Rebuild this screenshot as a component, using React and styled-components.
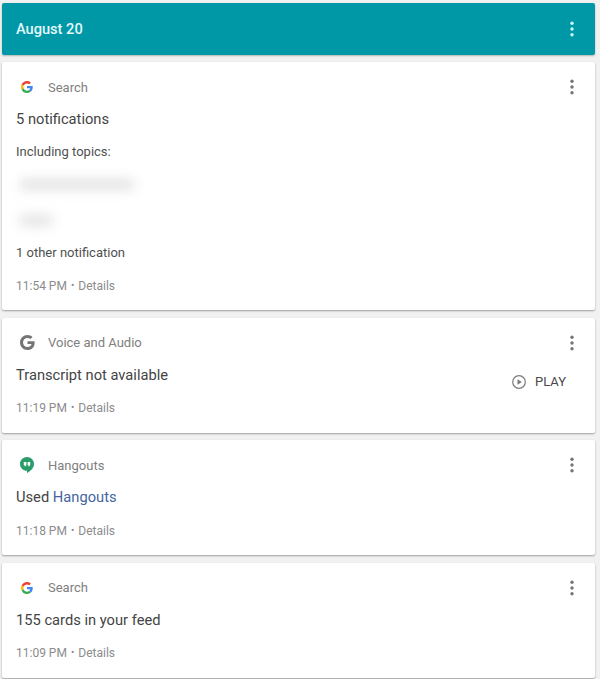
import styled, { createGlobalStyle } from "styled-components";

const GlobalStyle = createGlobalStyle`
  html, body {
    margin: 0;
    padding: 0;
    background: #f1f1f1;
    font-family: Roboto, "Liberation Sans", sans-serif;
  }
`;

const GoogleColorIcon = () => (
  <svg width="12" height="12" viewBox="0 0 48 48">
    <path fill="#ea4335" d="M24 9.500c3.500 0 6.700 1.300 9.200 3.400l6.800-6.800C35.900 2.400 30.300 0 24 0 14.600 0 6.500 5.400 2.600 13.200l7.900 6.100C12.400 13.600 17.700 9.500 24 9.500z" />
    <path fill="#4285f4" d="M46.900 24.500c0-1.600-.1-3.100-.4-4.500H24v9h12.900c-.6 3-2.200 5.500-4.700 7.200l7.700 6c4.500-4.200 7-10.300 7-17.700z" />
    <path fill="#fbbc05" d="M10.500 28.700c-.5-1.400-.8-3-.8-4.700s.3-3.200.8-4.700l-7.900-6.100C.9 16.500 0 20.100 0 24s.9 7.500 2.600 10.800l7.900-6.100z" />
    <path fill="#34a853" d="M24 48c6.500 0 11.900-2.100 15.900-5.800l-7.700-6c-2.200 1.400-4.900 2.300-8.200 2.300-6.300 0-11.600-4.100-13.500-9.800l-7.900 6.100C6.500 42.600 14.600 48 24 48z" />
  </svg>
);

const GoogleGreyIcon = () => (
  <svg width="15" height="15" viewBox="0 0 48 48">
    <path
      fill="#757575"
      d="M46.900 24.500c0-1.600-.1-3.100-.4-4.500H24v9h12.900c-1.100 5.700-6.200 9.500-12.900 9.500-8 0-14.300-6.500-14.300-14.500S16 9.500 24 9.500c3.500 0 6.700 1.300 9.200 3.400l6.800-6.800C35.900 2.400 30.300 0 24 0 10.700 0 0 10.700 0 24s10.700 24 24 24c13.500 0 22.900-9.500 22.900-23.500z"
    />
  </svg>
);

const HangoutsIcon = () => (
  <svg width="14" height="16" viewBox="0 0 14 16">
    <path fill="#2a9d6a" d="M7 0C3.100 0 0 3.100 0 7s3.100 6.800 7 6.800V16c3.800-1.900 7-5.100 7-9 0-3.900-3.100-7-7-7z" />
    <path fill="#fff" d="M3.800 5h2.600v2.600c0 1-.7 1.800-1.700 1.900V8.200h-.9zM7.600 5h2.600v2.600c0 1-.7 1.800-1.700 1.900V8.200h-.9z" />
  </svg>
);

const PlayIcon = () => (
  <svg width="16" height="16" viewBox="0 0 16 16">
    <circle cx="8" cy="8" r="6.300" fill="none" stroke="#7a7a7a" strokeWidth="1.200" />
    <path fill="#7a7a7a" d="M6.500 5.200 10.800 8l-4.300 2.800z" />
  </svg>
);

const MoreIcon = ({ light }) => (
  <svg width="4" height="16" viewBox="0 0 4 16">
    <g fill={light ? "#c9f6f9" : "#757575"}>
      <circle cx="2" cy="2.300" r="1.700" />
      <circle cx="2" cy="8" r="1.700" />
      <circle cx="2" cy="13.700" r="1.700" />
    </g>
  </svg>
);

const cards = [
  {
    id: "search-1",
    icon: <GoogleColorIcon />,
    source: "Search",
    title: "5 notifications",
    time: "11:54 PM",
    height: 248,
    topics: true,
  },
  {
    id: "voice",
    icon: <GoogleGreyIcon />,
    source: "Voice and Audio",
    title: "Transcript not available",
    time: "11:19 PM",
    height: 115,
    play: true,
  },
  {
    id: "hangouts",
    icon: <HangoutsIcon />,
    source: "Hangouts",
    title: "Used ",
    link: "Hangouts",
    time: "11:18 PM",
    height: 115,
  },
  {
    id: "search-2",
    icon: <GoogleColorIcon />,
    source: "Search",
    title: "155 cards in your feed",
    time: "11:09 PM",
    height: 115,
  },
];

export default function App() {
  return (
    <Page>
      <GlobalStyle />
      <DateBar>
        <DateText>August 20</DateText>
        <MoreIcon light />
      </DateBar>
      <CardList>
        {cards.map((card) => (
          <Card key={card.id} $height={card.height}>
            <CardHeader>
              <IconSlot>{card.icon}</IconSlot>
              <SourceText>{card.source}</SourceText>
              <MoreIcon />
            </CardHeader>
            <Title>
              {card.title}
              {card.link && <TitleLink>{card.link}</TitleLink>}
            </Title>
            {card.topics && (
              <Topics>
                <SmallLine>Including topics:</SmallLine>
                <BlurredBar $width={114} $top={20} />
                <BlurredBar $width={32} $top={25} />
                <OtherLine>1 other notification</OtherLine>
              </Topics>
            )}
            <MetaLine>
              {card.time}
              <Dot>•</Dot>
              Details
            </MetaLine>
            {card.play && (
              <PlayButton>
                <PlayIcon />
                <PlayText>PLAY</PlayText>
              </PlayButton>
            )}
          </Card>
        ))}
      </CardList>
    </Page>
  );
}

const Page = styled.div`
  width: 600px;
  height: 679px;
  box-sizing: border-box;
  padding: 3px 5px 0 2px;
  overflow: hidden;
`;

const DateBar = styled.div`
  height: 52px;
  box-sizing: border-box;
  padding: 0 21px 0 14px;
  display: flex;
  align-items: center;
  justify-content: space-between;
  background: #0097a7;
  border-radius: 2px;
  box-shadow: 0 1px 2px rgba(0, 0, 0, 0.25);
`;

const DateText = styled.div`
  font-size: 14.6px;
  font-weight: 500;
  color: #e3f8fa;
`;

const CardList = styled.div`
  display: flex;
  flex-direction: column;
  gap: 7.5px;
  margin-top: 7px;
`;

const Card = styled.div`
  position: relative;
  height: ${(props) => props.$height}px;
  box-sizing: border-box;
  padding: 0 21px 0 14px;
  display: flex;
  flex-direction: column;
  background: #fff;
  border-radius: 2px;
  box-shadow: 0 1px 2px rgba(0, 0, 0, 0.35);
`;

const CardHeader = styled.div`
  height: 50px;
  flex-shrink: 0;
  display: flex;
  align-items: center;
`;

const IconSlot = styled.div`
  width: 22px;
  margin-right: 10px;
  display: flex;
  align-items: center;
  justify-content: center;
`;

const SourceText = styled.div`
  flex: 1;
  font-size: 13px;
  color: #808080;
`;

const Title = styled.div`
  font-size: 14.7px;
  line-height: 16px;
  color: #444;
  margin-top: -1px;
`;

const TitleLink = styled.span`
  color: #44659f;
`;

const Topics = styled.div`
  display: flex;
  flex-direction: column;
  margin-top: 18px;
`;

const SmallLine = styled.div`
  font-size: 13px;
  line-height: 14px;
  color: #505050;
`;

const OtherLine = styled(SmallLine)`
  margin-top: 20px;
`;

const BlurredBar = styled.div`
  width: ${(props) => props.$width}px;
  height: 11px;
  margin-top: ${(props) => props.$top}px;
  margin-left: 4px;
  background: #e3e3e3;
  filter: blur(6px);
`;

const MetaLine = styled.div`
  margin-top: auto;
  margin-bottom: 18px;
  font-size: 12px;
  line-height: 13px;
  color: #8c8c8c;
`;

const Dot = styled.span`
  font-size: 10px;
  margin: 0 4px;
  vertical-align: 0.5px;
`;

const PlayButton = styled.div`
  position: absolute;
  right: 29px;
  top: 56px;
  display: flex;
  align-items: center;
  gap: 8px;
`;

const PlayText = styled.div`
  font-size: 13px;
  color: #4a4a4a;
`;
